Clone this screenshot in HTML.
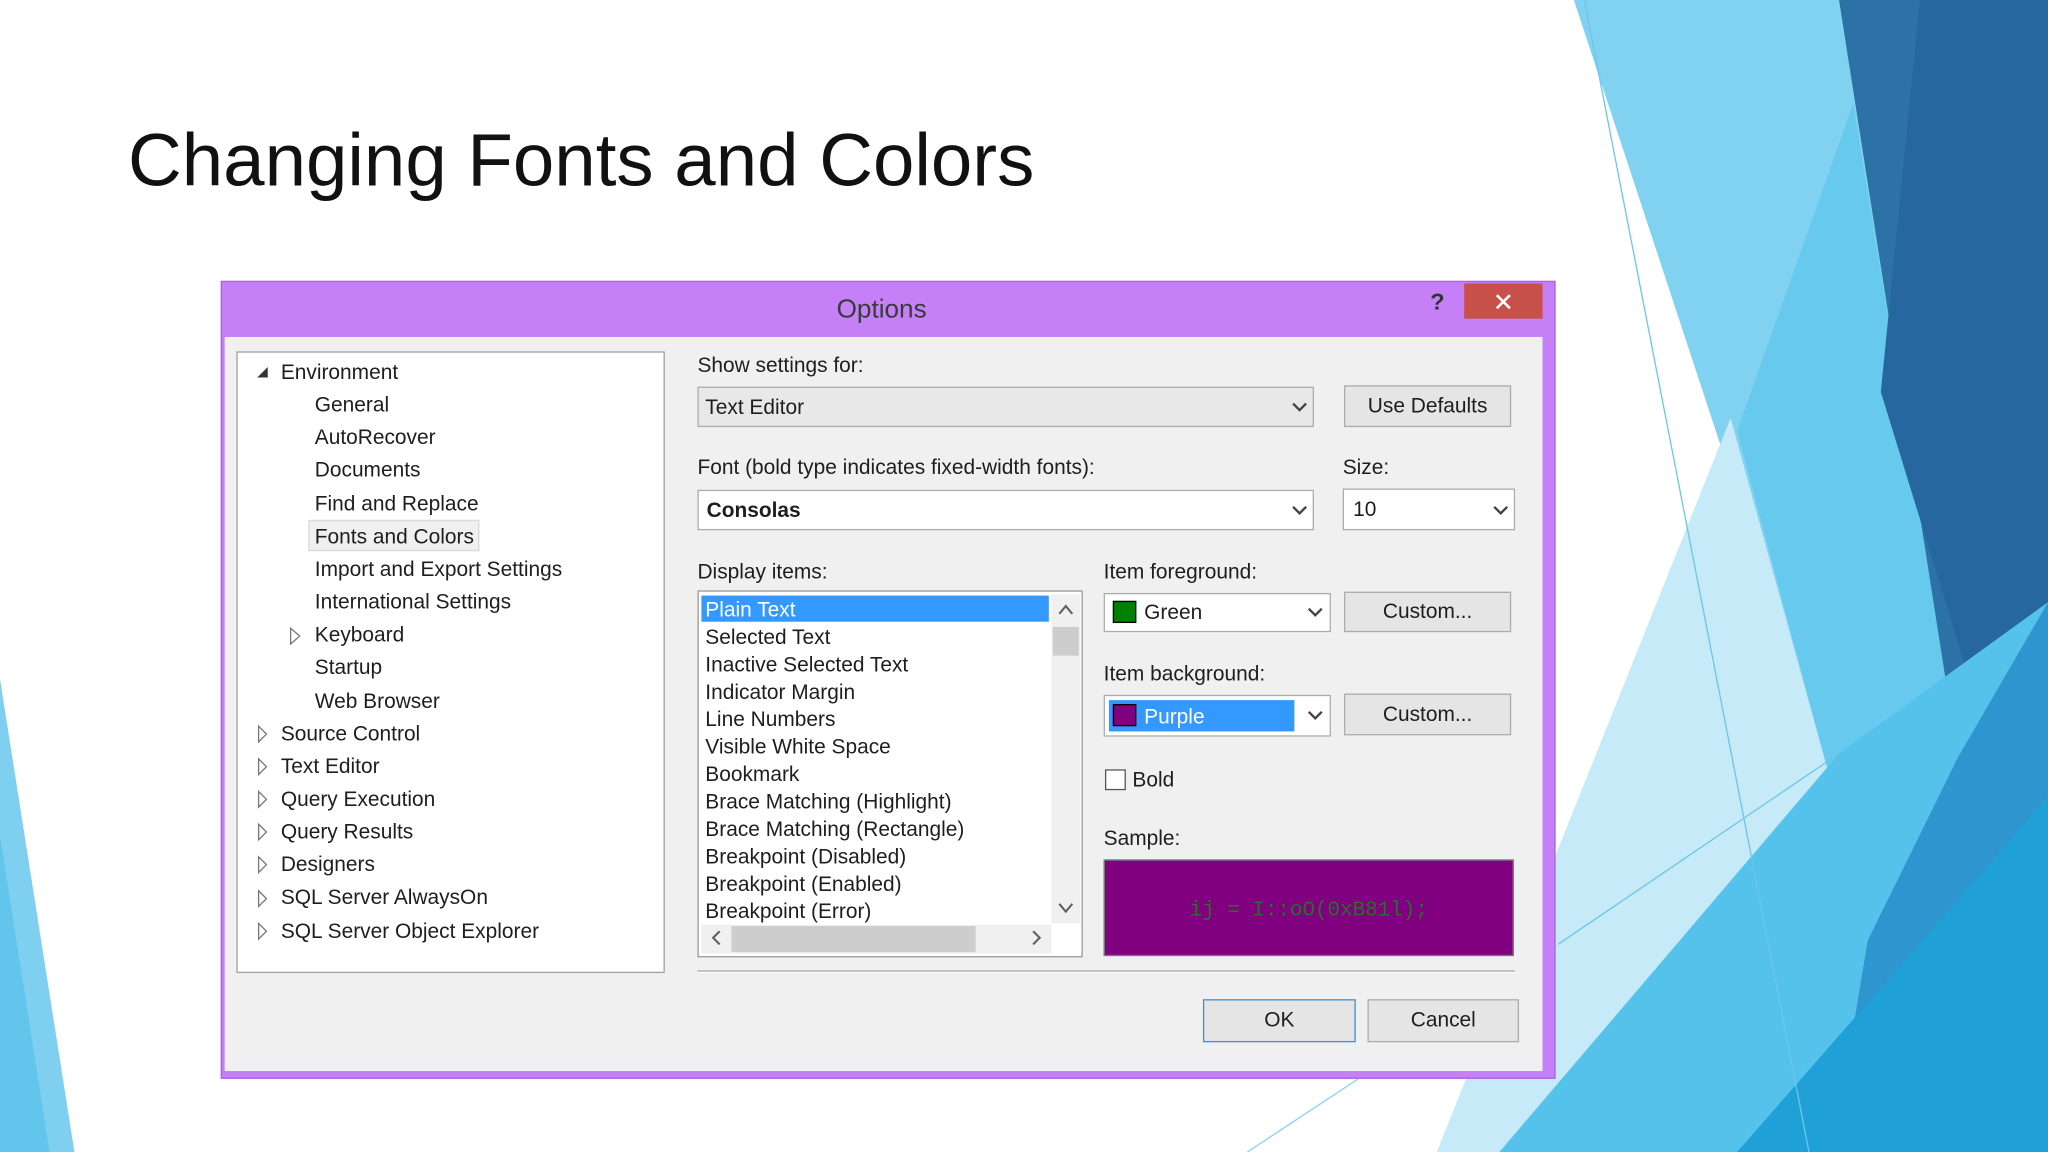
<!DOCTYPE html>
<html><head><meta charset="utf-8"><style>
html,body{margin:0;padding:0;width:2048px;height:1152px;overflow:hidden;background:#fff}
#w{position:absolute;left:0;top:0;width:1568px;height:882px;transform:scale(1.30612);transform-origin:0 0;font-family:"Liberation Sans",sans-serif;color:#1e1e1e}
.a{position:absolute}
.t{font-size:16px;white-space:nowrap}
.box{position:absolute;box-sizing:border-box}
.btn{position:absolute;box-sizing:border-box;background:#e5e5e5;border:1px solid #acacac;text-align:center;font-size:16px}
</style></head><body><div id="w">
<svg class="a" style="left:0;top:0" width="1568" height="882">
<polygon points="1205,0 1410,0 1500,580 1400,592" fill="#80d2f0"/>
<polygon points="1419,79 1500,580 1400,592 1330,330" fill="#68c9ee"/>
<polygon points="1325,320 1400,592 1170,882 1100,882" fill="#c6eaf8"/>
<polygon points="1408,0 1568,0 1568,461 1499,580" fill="#2d72a6"/>
<polygon points="1470,0 1568,0 1568,461 1520,560 1440,300" fill="#27679f"/>
<polygon points="1148,882 1408,577 1568,461 1568,882" fill="#55c2ec"/>
<polygon points="1330,882 1568,610 1568,882" fill="#1fa1d8"/>
<polygon points="1430,720 1499,580 1568,461 1568,610 1420,780" fill="#2e95cf"/>
<line x1="1213" y1="0" x2="1385" y2="882" stroke="#6cc6ea" stroke-width="1"/>
<line x1="1193" y1="723" x2="1408" y2="577" stroke="#6cc6ea" stroke-width="1"/>
<line x1="955" y1="882" x2="1040" y2="826" stroke="#8ad6f2" stroke-width="1"/>
<polygon points="0,520 57,882 0,882" fill="#7fd0f0"/>
<polygon points="0,640 38,882 0,882" fill="#62c5ec"/>
</svg>
<div class="a" style="left:98px;top:95px;font-size:57px;line-height:1;color:#111;white-space:nowrap">Changing Fonts and Colors</div>

<div class="box" style="left:169px;top:215px;width:1022px;height:611px;background:#c580f8;border:1px solid #a863e0"></div>
<div class="a" style="left:169px;top:226px;width:1012px;text-align:center;font-size:20px;color:#3a3a3a">Options</div>
<div class="a" style="left:1095px;top:221px;font-size:18px;font-weight:bold;color:#333">?</div>
<div class="box" style="left:1121px;top:217px;width:60px;height:27px;background:#c7504a"></div>
<svg class="a" style="left:1144px;top:224px" width="14" height="14"><path d="M2,2 L12,12 M12,2 L2,12" stroke="#fff" stroke-width="2"/></svg>
<div class="box" style="left:172px;top:258px;width:1009px;height:562px;background:#f0f0f0"></div>

<div class="box" style="left:181px;top:269px;width:328px;height:476px;background:#fff;border:1px solid #a0a0a0"></div>
<div class="box" style="left:236px;top:398px;width:131px;height:24px;background:#f0f0f0;border:1px solid #dadada"></div>
<svg class="a" style="left:195px;top:279px" width="12" height="12"><polygon points="10,2 10,10 2,10" fill="#333"/></svg>
<div class="a t" style="left:215px;top:273px;line-height:25.15px">Environment</div>
<div class="a t" style="left:241px;top:298.1px;line-height:25.15px">General<br>AutoRecover<br>Documents<br>Find and Replace<br>Fonts and Colors<br>Import and Export Settings<br>International Settings<br>Keyboard<br>Startup<br>Web Browser</div>
<div class="a t" style="left:215px;top:549.7px;line-height:25.15px">Source Control<br>Text Editor<br>Query Execution<br>Query Results<br>Designers<br>SQL Server AlwaysOn<br>SQL Server Object Explorer</div>
<svg class="a" style="left:190px;top:470px" width="40" height="260" fill="none" stroke="#777" stroke-width="1">
<polygon points="33,11 40,17 33,23" transform="translate(-0.5,0)"/>
<polygon points="8,86 14,92 8,98"/>
<polygon points="8,111 14,117 8,123"/>
<polygon points="8,136 14,142 8,148"/>
<polygon points="8,161 14,167 8,173"/>
<polygon points="8,186 14,192 8,198"/>
<polygon points="8,212 14,218 8,224"/>
<polygon points="8,237 14,243 8,249"/>
</svg>

<div class="a t" style="left:534px;top:272px">Show settings for:</div>
<div class="box" style="left:534px;top:296px;width:472px;height:31px;background:#e8e8e8;border:1px solid #acacac"></div>
<div class="a t" style="left:540px;top:304px">Text Editor</div>
<div class="btn" style="left:1029px;top:295px;width:128px;height:32px;line-height:31px">Use Defaults</div>

<div class="a t" style="left:534px;top:350px">Font (bold type indicates fixed-width fonts):</div>
<div class="box" style="left:534px;top:375px;width:472px;height:31px;background:#fff;border:1px solid #acacac"></div>
<div class="a t" style="left:541px;top:383px;font-weight:bold">Consolas</div>
<div class="a t" style="left:1028px;top:350px">Size:</div>
<div class="box" style="left:1028px;top:374px;width:132px;height:32px;background:#fff;border:1px solid #acacac"></div>
<div class="a t" style="left:1036px;top:382px">10</div>

<div class="a t" style="left:534px;top:430px">Display items:</div>
<div class="box" style="left:534px;top:452px;width:295px;height:281px;background:#fff;border:1px solid #999"></div>
<div class="box" style="left:537px;top:456px;width:266px;height:20px;background:#3399ff"></div>
<div class="a t" style="left:540px;top:456.5px;line-height:21px"><span style="color:#fff">Plain Text</span><br>Selected Text<br>Inactive Selected Text<br>Indicator Margin<br>Line Numbers<br>Visible White Space<br>Bookmark<br>Brace Matching (Highlight)<br>Brace Matching (Rectangle)<br>Breakpoint (Disabled)<br>Breakpoint (Enabled)<br>Breakpoint (Error)</div>
<div class="box" style="left:805px;top:455px;width:22px;height:252px;background:#f0f0f0"></div>
<div class="box" style="left:806px;top:480px;width:20px;height:22px;background:#cdcdcd"></div>
<div class="box" style="left:537px;top:708px;width:268px;height:22px;background:#f0f0f0"></div>
<div class="box" style="left:560px;top:709px;width:187px;height:20px;background:#cdcdcd"></div>
<svg class="a" style="left:537px;top:455px" width="290" height="275" fill="none" stroke="#606060" stroke-width="1.6">
<path d="M274,15 L279,9 L284,15"/><path d="M274,237 L279,243 L284,237"/>
<path d="M14,258 L9,263 L14,268"/><path d="M254,258 L259,263 L254,268"/>
</svg>

<div class="a t" style="left:845px;top:430px">Item foreground:</div>
<div class="box" style="left:845px;top:454px;width:174px;height:30px;background:#fff;border:1px solid #acacac"></div>
<div class="box" style="left:852px;top:460px;width:18px;height:17px;background:#008000;border:1px solid #000"></div>
<div class="a t" style="left:876px;top:461px">Green</div>
<div class="btn" style="left:1029px;top:453px;width:128px;height:31px;line-height:30px">Custom...</div>

<div class="a t" style="left:845px;top:508px">Item background:</div>
<div class="box" style="left:845px;top:532px;width:174px;height:32px;background:#fff;border:1px solid #acacac"></div>
<div class="box" style="left:849px;top:536px;width:142px;height:24px;background:#3399ff"></div>
<div class="box" style="left:852px;top:539px;width:18px;height:17px;background:#800080;border:1px solid #000"></div>
<div class="a t" style="left:876px;top:541px;color:#fff">Purple</div>
<div class="btn" style="left:1029px;top:531px;width:128px;height:32px;line-height:31px">Custom...</div>

<div class="box" style="left:846px;top:589px;width:16px;height:16px;background:#fff;border:1px solid #555"></div>
<div class="a t" style="left:867px;top:589px">Bold</div>

<div class="a t" style="left:845px;top:634px">Sample:</div>
<div class="box" style="left:845px;top:658px;width:314px;height:74px;background:#800080;border:1px solid #777"></div>
<div class="a" style="left:845px;top:688px;width:314px;text-align:center;font-family:'Liberation Mono',monospace;font-size:16px;color:#2c6b2c">ij = I::oO(0xB81l);</div>

<svg class="a" style="left:0;top:0" width="1568" height="882" fill="none" stroke="#444" stroke-width="1.8">
<path d="M990,309 L995,314 L1000,309"/><path d="M990,388 L995,393 L1000,388"/>
<path d="M1144,388 L1149,393 L1154,388"/><path d="M1002,466 L1007,471 L1012,466"/>
<path d="M1002,545 L1007,550 L1012,545"/>
</svg>

<div class="box" style="left:534px;top:743px;width:626px;height:2px;border-top:1px solid #a0a0a0;border-bottom:1px solid #fff"></div>
<div class="btn" style="left:921px;top:765px;width:117px;height:33px;line-height:32px;border-color:#3c8fdc">OK</div>
<div class="btn" style="left:1047px;top:765px;width:116px;height:33px;line-height:32px">Cancel</div>
</div></body></html>
